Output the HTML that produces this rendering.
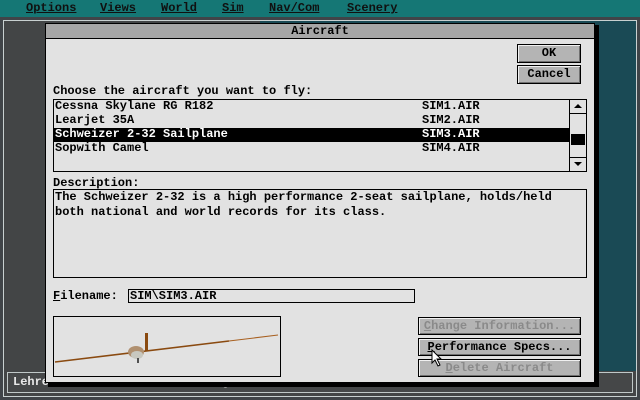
<!DOCTYPE html>
<html><head><meta charset="utf-8"><style>
*{margin:0;padding:0;box-sizing:border-box}
body{width:640px;height:400px;overflow:hidden;background:#404448;font-family:"Liberation Mono",monospace;font-weight:bold;font-size:12px;position:relative;color:#000}
.a{position:absolute;white-space:pre}
.menu{left:0;top:0;width:640px;height:17px;background:#157775}
.menu span{position:absolute;top:1px;color:#101010;text-decoration:underline;text-decoration-thickness:1px}
.btn{position:absolute;background:#b4b4b4;border:1px solid #000;box-shadow:inset 1px 1px 0 #f0f0f0,inset -1px -1px 0 #707070;text-align:center;line-height:16px}
.dis{color:#8a8a8a}
</style></head><body>
<div class="a menu">
<span style="left:26px">Options</span><span style="left:100px">Views</span><span style="left:161px">World</span><span style="left:222px">Sim</span><span style="left:269px">Nav/Com</span><span style="left:347px">Scenery</span>
</div>
<div class="a" style="left:3px;top:20px;width:634px;height:377px;border:1px solid #c8d0d0;background:#434546"></div>
<div class="a" style="left:260px;top:21px;width:376px;height:350px;background:#1a4a55"></div>
<div class="a" style="left:7px;top:372px;width:626px;height:21px;border:1px solid #c0c8c8;background:#454748"></div>
<div class="a" style="left:13px;top:375px;color:#e8e8e8">Lehrer: Die Wesen der Rechnung</div>
<!-- dialog -->
<div class="a" style="left:48px;top:25px;width:551px;height:362px;background:#000"></div>
<div class="a" style="left:45px;top:23px;width:550px;height:360px;background:#e2e2e2;border:1px solid #000"></div>
<div class="a" style="left:46px;top:24px;width:548px;height:15px;background:#a6a6a6;border-bottom:1px solid #000;text-align:center;line-height:15px">Aircraft</div>
<div class="btn" style="left:517px;top:44px;width:64px;height:19px">OK</div>
<div class="btn" style="left:517px;top:65px;width:64px;height:19px">Cancel</div>
<div class="a" style="left:53px;top:84px">Choose the aircraft you want to fly:</div>
<div class="a" style="left:53px;top:99px;width:534px;height:73px;border:1px solid #000;background:#e2e2e2"></div>
<div class="a" style="left:54px;top:128px;width:515px;height:14px;background:#000"></div>
<div class="a" style="left:55px;top:99px;line-height:14px">Cessna Skylane RG R182
Learjet 35A
<span style="color:#fff">Schweizer 2-32 Sailplane</span>
Sopwith Camel</div>
<div class="a" style="left:422px;top:99px;line-height:14px">SIM1.AIR
SIM2.AIR
<span style="color:#fff">SIM3.AIR</span>
SIM4.AIR</div>
<div class="a" style="left:569px;top:99px;width:18px;height:73px;border:1px solid #000;background:#e2e2e2"></div>
<div class="a" style="left:569px;top:99px;width:18px;height:15px;border:1px solid #000"></div>
<div class="a" style="left:569px;top:157px;width:18px;height:15px;border:1px solid #000"></div>
<svg class="a" style="left:569px;top:99px" width="18" height="73"><polygon points="5,9 13,9 9,5" fill="#000"/><polygon points="5,63 13,63 9,67" fill="#000"/><rect x="2" y="35" width="14" height="11" fill="#000"/></svg>
<div class="a" style="left:53px;top:176px">Description:</div>
<div class="a" style="left:53px;top:189px;width:534px;height:89px;border:1px solid #000;background:#e2e2e2"></div>
<div class="a" style="left:55px;top:190px;line-height:15px">The Schweizer 2-32 is a high performance 2-seat sailplane, holds/held
both national and world records for its class.</div>
<div class="a" style="left:53px;top:289px"><u>F</u>ilename:</div>
<div class="a" style="left:128px;top:289px;width:287px;height:14px;border:1px solid #000;line-height:12px;padding-left:1px">SIM\SIM3.AIR</div>
<div class="a" style="left:53px;top:316px;width:228px;height:61px;border:1px solid #000;background:#e2e2e2"></div>
<svg class="a" style="left:53px;top:316px" width="228" height="61">
<line x1="2" y1="46" x2="176" y2="25" stroke="#8a4a10" stroke-width="1.5"/>
<line x1="176" y1="25" x2="225" y2="19" stroke="#a86020" stroke-width="1"/>
<rect x="92" y="17" width="3" height="18" fill="#8a4a10"/>
<ellipse cx="83" cy="36" rx="8" ry="6" fill="#b09070"/>
<ellipse cx="84" cy="39" rx="6" ry="4" fill="#c8c8c0"/>
<rect x="84" y="42" width="2" height="5" fill="#505050"/>
</svg>
<div class="btn dis" style="left:418px;top:317px;width:163px;height:18px"><u>C</u>hange Information...</div>
<div class="btn" style="left:418px;top:338px;width:163px;height:18px"><u>P</u>erformance Specs...</div>
<div class="btn dis" style="left:418px;top:359px;width:163px;height:18px"><u>D</u>elete Aircraft</div>
<svg class="a" style="left:431px;top:349px" width="12" height="18"><polygon points="1,1 1,14 4,11 7,17 9,16 6,10 10,10" fill="#fff" stroke="#000" stroke-width="1"/></svg>
</body></html>
